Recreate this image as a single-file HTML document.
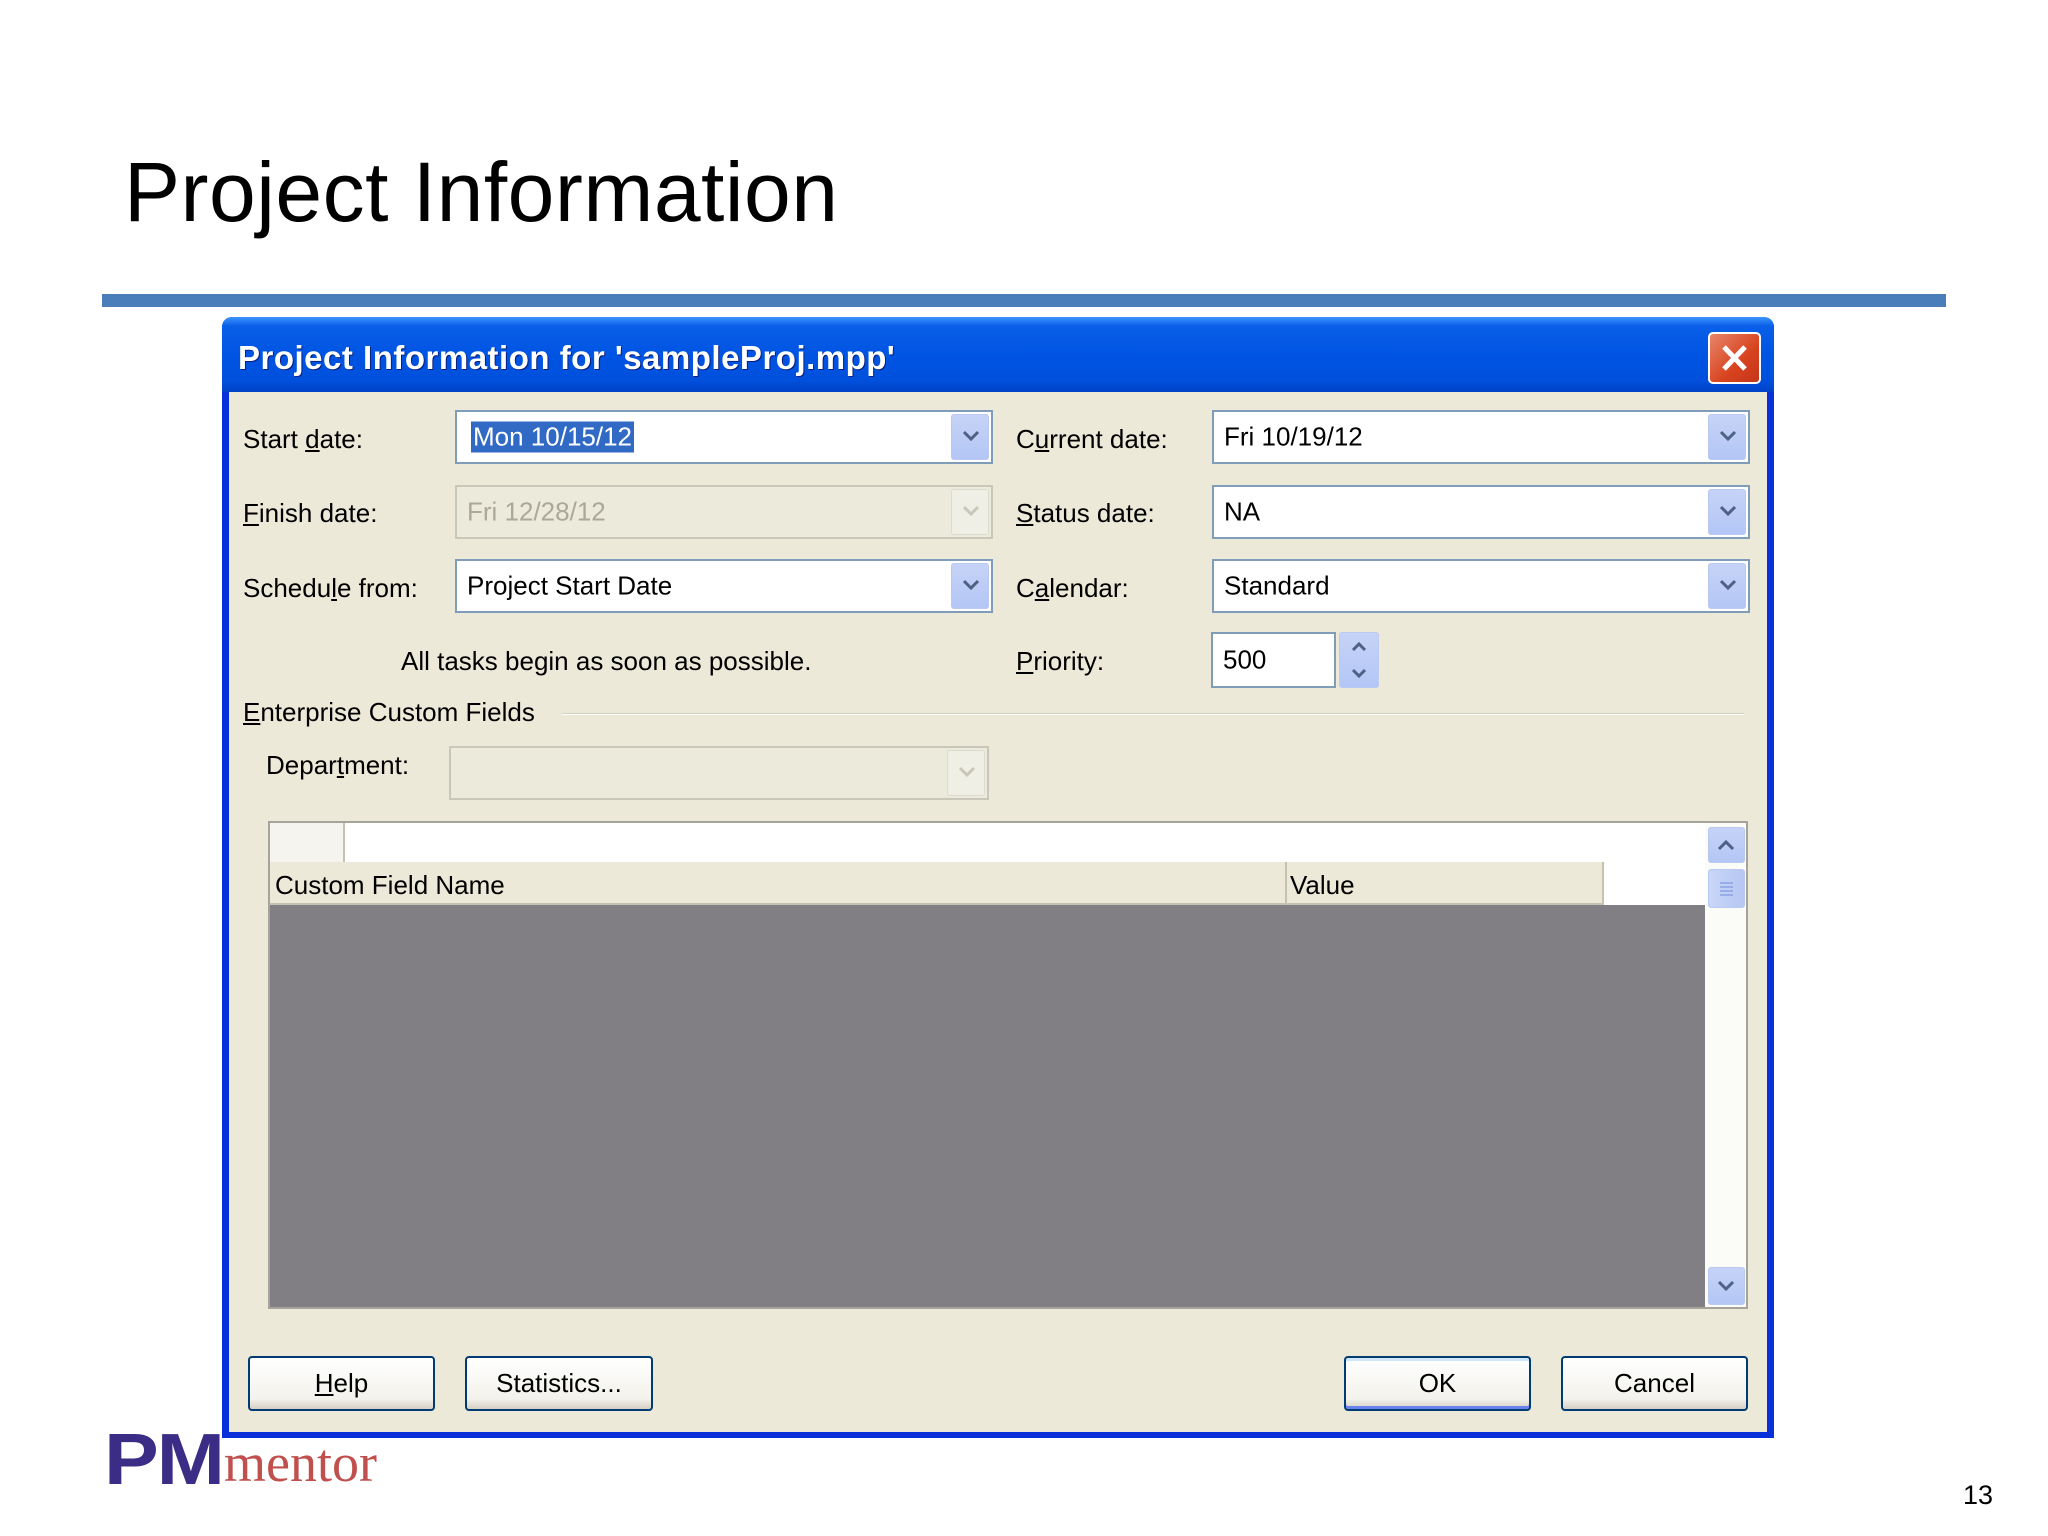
<!DOCTYPE html>
<html><head><meta charset="utf-8"><style>
*{margin:0;padding:0;box-sizing:border-box}
body{width:2048px;height:1536px;background:#fff;position:relative;overflow:hidden;font-family:"Liberation Sans",sans-serif}
.a{position:absolute}
.t{font-size:26px;color:#000;white-space:nowrap;line-height:1}
.combo{position:absolute;background:#fff;border:2px solid #7f9db9}
.combo .btn{position:absolute;right:2px;top:2px;bottom:2px;width:38px;background:linear-gradient(#c6d3f7,#b3c6f5);border:1px solid #b9c9ef;border-radius:3px}
.combo .btn svg{position:absolute;left:11px;top:15px}
.combo.dis{background:#ebeadb;border-color:#c9c7ba}
.combo.dis .btn{background:#f0efe6;border-color:#dcdbd2}
.combo .v{position:absolute;left:10px;top:50%;transform:translateY(-50%);font-size:26px}
.pb{position:absolute;height:55px;border:2px solid #003c74;border-radius:4px;background:linear-gradient(#fff,#f3f2ec 80%,#d6d0c5);font-size:26px;text-align:center;line-height:51px}
</style></head><body>

<div class="a" style="left:124px;top:150px;font-size:84px;line-height:1;color:#000;letter-spacing:0.5px">Project Information</div>
<div class="a" style="left:102px;top:294px;width:1844px;height:13px;background:#4a7ebb"></div>

<!-- dialog -->
<div class="a" style="left:222px;top:317px;width:1552px;height:1121px;background:#0831d9;border-radius:10px 10px 0 0"></div>
<div class="a" style="left:222px;top:317px;width:1552px;height:75px;border-radius:10px 10px 0 0;background:linear-gradient(#3d95ff 0%,#0a5fe8 12%,#0054e3 50%,#0050dc 85%,#0042c8 100%)"></div>
<div class="a" style="left:238px;top:341px;font-size:33px;font-weight:bold;color:#fff;line-height:1;letter-spacing:0.5px;text-shadow:1px 1px #0a1e7a">Project Information for 'sampleProj.mpp'</div>
<div class="a" style="left:1708px;top:332px;width:53px;height:52px;border:2px solid #fff;border-radius:5px;background:linear-gradient(135deg,#e8856a,#d8431f 60%,#c4351a)">
<svg width="49" height="48" style="position:absolute;left:0;top:0"><path d="M14 13 L35 35 M35 13 L14 35" stroke="#fff" stroke-width="5"/></svg></div>
<div class="a" style="left:229px;top:392px;width:1538px;height:1040px;background:#ece9d8"></div>

<!-- row labels -->
<div class="a t" style="left:243px;top:426px">Start <u>d</u>ate:</div>
<div class="a t" style="left:243px;top:500px"><u>F</u>inish date:</div>
<div class="a t" style="left:243px;top:575px">Schedu<u>l</u>e from:</div>
<div class="a t" style="left:1016px;top:426px">C<u>u</u>rrent date:</div>
<div class="a t" style="left:1016px;top:500px"><u>S</u>tatus date:</div>
<div class="a t" style="left:1016px;top:575px">C<u>a</u>lendar:</div>
<div class="a t" style="left:401px;top:648px">All tasks begin as soon as possible.</div>
<div class="a t" style="left:1016px;top:648px"><u>P</u>riority:</div>

<div class="combo" style="left:455px;top:410px;width:538px;height:54px"><span class="v" style="left:14px;background:#316ac5;color:#fff;padding:0 2px">Mon 10/15/12</span><div class="btn"><svg width="16" height="12"><path d="M1 2 L8 9 L15 2" stroke="#4d6185" stroke-width="3" fill="none"/></svg></div></div>
<div class="combo dis" style="left:455px;top:485px;width:538px;height:54px"><span class="v" style="color:#aca899">Fri 12/28/12</span><div class="btn"><svg width="16" height="12"><path d="M1 2 L8 9 L15 2" stroke="#c9c7ba" stroke-width="3" fill="none"/></svg></div></div>
<div class="combo" style="left:455px;top:559px;width:538px;height:54px"><span class="v">Project Start Date</span><div class="btn"><svg width="16" height="12"><path d="M1 2 L8 9 L15 2" stroke="#4d6185" stroke-width="3" fill="none"/></svg></div></div>
<div class="combo" style="left:1212px;top:410px;width:538px;height:54px"><span class="v">Fri 10/19/12</span><div class="btn"><svg width="16" height="12"><path d="M1 2 L8 9 L15 2" stroke="#4d6185" stroke-width="3" fill="none"/></svg></div></div>
<div class="combo" style="left:1212px;top:485px;width:538px;height:54px"><span class="v">NA</span><div class="btn"><svg width="16" height="12"><path d="M1 2 L8 9 L15 2" stroke="#4d6185" stroke-width="3" fill="none"/></svg></div></div>
<div class="combo" style="left:1212px;top:559px;width:538px;height:54px"><span class="v">Standard</span><div class="btn"><svg width="16" height="12"><path d="M1 2 L8 9 L15 2" stroke="#4d6185" stroke-width="3" fill="none"/></svg></div></div>

<div class="combo" style="left:1211px;top:632px;width:125px;height:56px"><span class="v">500</span></div>
<div class="a" style="left:1339px;top:632px;width:40px;height:56px;background:linear-gradient(#c6d3f7,#b3c6f5);border:1px solid #b9c9ef;border-radius:3px">
<svg width="38" height="54"><path d="M13 17 L19 11 L25 17" stroke="#4d6185" stroke-width="3" fill="none"/><path d="M13 37 L19 43 L25 37" stroke="#4d6185" stroke-width="3" fill="none"/></svg></div>

<div class="a t" style="left:243px;top:699px"><u>E</u>nterprise Custom Fields</div>
<div class="a" style="left:562px;top:713px;width:1182px;height:2px;background:#d0d0bf;border-bottom:1px solid #fff"></div>
<div class="a t" style="left:266px;top:752px">Depar<u>t</u>ment:</div>
<div class="combo dis" style="left:449px;top:746px;width:540px;height:54px"><div class="btn"><svg width="16" height="12"><path d="M1 2 L8 9 L15 2" stroke="#c9c7ba" stroke-width="3" fill="none"/></svg></div></div>

<!-- grid -->
<div class="a" style="left:268px;top:821px;width:1480px;height:488px;background:#fff;border:2px solid #a5a39a"></div>
<div class="a" style="left:270px;top:823px;width:75px;height:39px;border-right:2px solid #c5c2b2;background:#f5f4ee"></div>
<div class="a" style="left:270px;top:862px;width:1334px;height:43px;background:#ece9d8;border-bottom:2px solid #c5c2b2;border-right:2px solid #c5c2b2"></div>
<div class="a" style="left:1285px;top:862px;width:2px;height:43px;background:#c5c2b2"></div>
<div class="a t" style="left:275px;top:872px">Custom Field Name</div>
<div class="a t" style="left:1290px;top:872px">Value</div>
<div class="a" style="left:270px;top:905px;width:1435px;height:402px;background:#817f83"></div>
<div class="a" style="left:1705px;top:823px;width:41px;height:484px;background:#fbfbf8"></div>
<div class="a" style="left:1708px;top:827px;width:37px;height:36px;background:linear-gradient(#c6d3f7,#b3c6f5);border:1px solid #b9c9ef;border-radius:3px"><svg width="35" height="34"><path d="M10 21 L17 14 L24 21" stroke="#4d6185" stroke-width="3" fill="none"/></svg></div>
<div class="a" style="left:1708px;top:869px;width:37px;height:39px;background:linear-gradient(90deg,#c9d6f8,#b5c7f3);border:1px solid #b9c9ef;border-radius:3px"><svg width="35" height="37"><path d="M11 13h13M11 17h13M11 21h13M11 25h13" stroke="#8aa2e0" stroke-width="1.5"/></svg></div>
<div class="a" style="left:1708px;top:1267px;width:37px;height:38px;background:linear-gradient(#c6d3f7,#b3c6f5);border:1px solid #b9c9ef;border-radius:3px"><svg width="35" height="36"><path d="M10 14 L17 21 L24 14" stroke="#4d6185" stroke-width="3" fill="none"/></svg></div>

<!-- buttons -->
<div class="pb" style="left:248px;top:1356px;width:187px"><u>H</u>elp</div>
<div class="pb" style="left:465px;top:1356px;width:188px">Statistics...</div>
<div class="pb" style="left:1344px;top:1356px;width:187px;box-shadow:inset 0 3px #cee7ff,inset 0 -3px #6982ee">OK</div>
<div class="pb" style="left:1561px;top:1356px;width:187px">Cancel</div>

<!-- logo -->
<div class="a" style="left:104px;top:1424px;font-size:76px;font-weight:bold;color:#3b2c85;line-height:1;letter-spacing:-2px;transform:scale(1.08,0.95);transform-origin:left top">PM</div>
<div class="a" style="left:224px;top:1436px;font-family:'Liberation Serif',serif;font-size:54px;color:#c0504d;line-height:1">mentor</div>
<div class="a" style="left:1963px;top:1482px;font-size:27px;color:#000;line-height:1">13</div>
</body></html>
